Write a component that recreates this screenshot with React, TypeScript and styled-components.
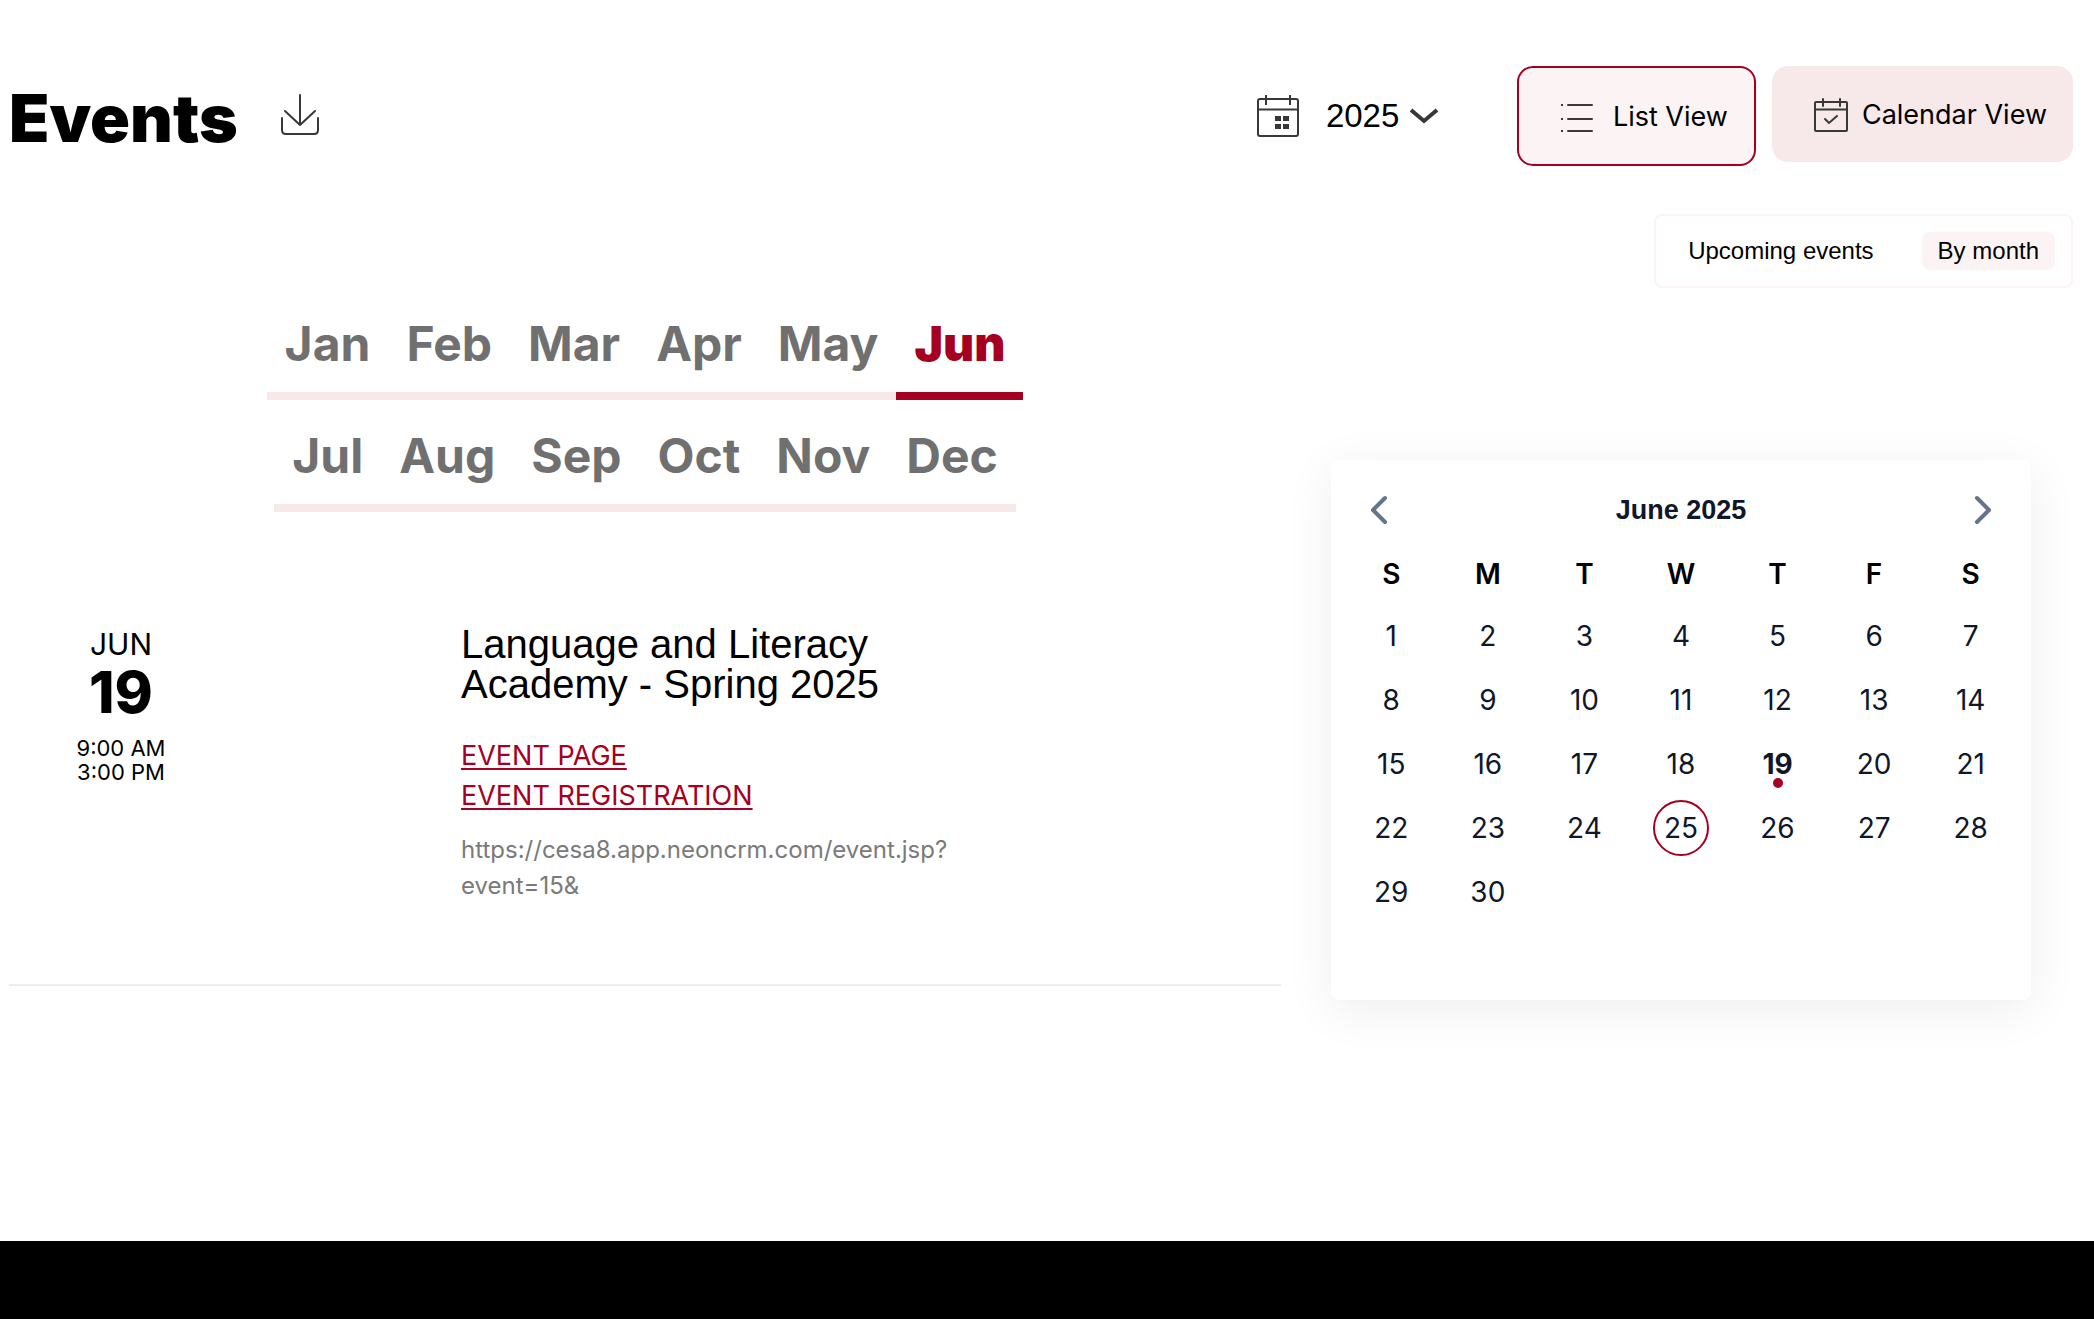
import React, { useState } from "react";
import styled, { createGlobalStyle } from "styled-components";

const color = {
  brand: "#a50021",
  tint: "#f7e8ea",
  tintLight: "#fcf3f5",
  muted: "#707070",
  icon: "#383838",
  navy: "#0f172a",
  slate: "#64748b",
  rule: "#e8eef4",
};

const body = `Inter, "Noto Sans", sans-serif`;
const plain = `"Liberation Sans", Arial, sans-serif`;

const GlobalStyle = createGlobalStyle`
  *, *::before, *::after { box-sizing: border-box; }
  body { margin: 0; background: #fff; color: #000; font-family: ${body}; }
  button, select { font: inherit; color: inherit; cursor: pointer; }
  h1, h2, p { margin: 0; }
`;

const Page = styled.div`
  min-height: 100vh;
  display: flex;
  flex-direction: column;
`;

const Content = styled.main`
  flex: 1;
  padding: 66px 21px 64px 9px;
`;

const Footer = styled.footer`
  height: 78px;
  background: #000;
`;

const Header = styled.header`
  display: flex;
  align-items: center;
  justify-content: space-between;
  min-height: 100px;
`;

const TitleGroup = styled.div`
  display: flex;
  align-items: center;
  gap: 42px;
`;

const Title = styled.h1`
  font-size: 66px;
  line-height: 72px;
  font-weight: 900;
  padding-top: 4px;
`;

const IconButton = styled.button`
  display: flex;
  padding: 0;
  border: 0;
  background: none;
`;

const Controls = styled.div`
  display: flex;
  align-items: center;
`;

const YearPicker = styled.label`
  display: flex;
  align-items: center;
  margin-right: 78px;
`;

const YearSelect = styled.select`
  appearance: none;
  border: 0;
  padding: 0;
  margin: 0 9px 0 27px;
  background: none;
  font-family: ${plain};
  font-size: 33px;
  line-height: 40px;
`;

const ViewSwitch = styled.div`
  display: flex;
  align-items: flex-start;
  gap: 16px;
`;

const ViewButton = styled.button<{ $active?: boolean }>`
  display: flex;
  align-items: center;
  gap: 14px;
  min-height: ${(p) => (p.$active ? 100 : 96)}px;
  padding: 2px 26px 0 42px;
  border: ${(p) => (p.$active ? `2px solid ${color.brand}` : "0")};
  border-radius: 16px;
  background: ${(p) => (p.$active ? color.tintLight : color.tint)};
  font-size: 27px;
  line-height: 32px;
`;

const FilterRow = styled.div`
  display: flex;
  justify-content: flex-end;
  margin-top: 48px;
`;

const FilterGroup = styled.div`
  display: flex;
  gap: 32px;
  padding: 16px;
  border: 2px solid ${color.tintLight};
  border-radius: 8px;
`;

const FilterButton = styled.button<{ $active?: boolean }>`
  padding: 0 16px;
  border: 0;
  border-radius: 8px;
  background: ${(p) => (p.$active ? color.tintLight : "transparent")};
  font-family: ${plain};
  font-size: 24px;
  line-height: 38px;
`;

const Columns = styled.div`
  display: grid;
  grid-template-columns: 53fr 33fr;
  align-items: start;
`;

const MonthTabs = styled.nav`
  display: flex;
  flex-direction: column;
  align-items: center;
`;

const MonthRow = styled.div`
  display: flex;
`;

const MonthTab = styled.button<{ $active?: boolean }>`
  padding: 24px 18px 16px;
  border: 0;
  border-bottom: 8px solid ${(p) => (p.$active ? color.brand : color.tint)};
  background: none;
  color: ${(p) => (p.$active ? color.brand : color.muted)};
  font-size: 48px;
  line-height: 64px;
  font-weight: ${(p) => (p.$active ? 900 : 700)};
`;

const EventItem = styled.article`
  display: grid;
  grid-template-columns: 224px minmax(0, 520px);
  column-gap: 228px;
  padding: 112px 0 80px;
  border-bottom: 2px solid ${color.rule};
`;

const EventDate = styled.div`
  display: flex;
  flex-direction: column;
  align-items: center;
  padding-top: 4px;
`;

const DateMonth = styled.span`
  font-size: 30px;
  line-height: 32px;
`;

const DateDay = styled.span`
  font-size: 58px;
  line-height: 64px;
  font-weight: 800;
  margin-bottom: 12px;
`;

const DateTime = styled.span`
  font-size: 22px;
  line-height: 24px;
`;

const EventTitle = styled.h2`
  font-family: ${plain};
  font-size: 40px;
  line-height: 40px;
  font-weight: 400;
  margin-bottom: 32px;
`;

const EventLinks = styled.div`
  display: flex;
  flex-direction: column;
  align-items: flex-start;
  margin-bottom: 16px;
`;

const EventLink = styled.a`
  color: ${color.brand};
  font-size: 27px;
  line-height: 40px;
  text-decoration-thickness: 2px;
  text-underline-offset: 3px;
`;

const EventUrl = styled.p`
  color: #7a7a7a;
  font-size: 24px;
  line-height: 36px;
`;

const Side = styled.aside`
  padding: 172px 42px 0 50px;
`;

const Card = styled.section`
  padding: 12px;
  border-radius: 8px;
  background: #fff;
  box-shadow: 0 10px 50px rgba(0, 0, 0, 0.07);
`;

const CardHeader = styled.div`
  display: flex;
  align-items: center;
  justify-content: space-between;
  height: 76px;
  padding: 0 26px;
`;

const CardTitle = styled.h2`
  color: ${color.navy};
  font-family: ${plain};
  font-size: 27px;
  line-height: 32px;
  font-weight: 700;
`;

const MonthGrid = styled.table`
  width: 100%;
  table-layout: fixed;
  border-collapse: collapse;
  font-size: 28px;
  line-height: 52px;
`;

const Weekday = styled.th`
  height: 56px;
  padding: 0 0 4px;
  font-weight: 600;
`;

const DayCell = styled.td`
  height: 64px;
  padding: 4px 0;
`;

const Day = styled.button<{ $today?: boolean; $event?: boolean }>`
  position: relative;
  display: block;
  width: 56px;
  height: 56px;
  margin: 0 auto;
  padding: 0;
  border: 2px solid ${(p) => (p.$today ? color.brand : "transparent")};
  border-radius: 50%;
  background: none;
  color: ${color.navy};
  font-weight: ${(p) => (p.$event ? 700 : 400)};
`;

const EventDot = styled.i`
  position: absolute;
  left: 21px;
  bottom: 2px;
  width: 10px;
  height: 10px;
  border-radius: 50%;
  background: ${color.brand};
`;

const DownloadIcon = () => (
  <svg width="40" height="44" viewBox="0 1 40 44" fill="none" stroke={color.icon} strokeWidth="2" strokeLinecap="round" strokeLinejoin="round">
    <path d="M20 2v30M5 18l15 14 15-14" />
    <path d="M2 25v12q0 4 4 4h28q4 0 4-4V25" />
  </svg>
);

const YearIcon = () => (
  <svg width="42" height="42" viewBox="0 0 42 42" fill="none" stroke={color.icon} strokeWidth="2">
    <rect x="1" y="4" width="40" height="37" rx="2" />
    <path d="M1 14.500h40M9 0v10M33 0v10" />
    <path d="M18 21h6v5h-6zM26 21h6v5h-6zM18 29h6v5h-6zM26 29h6v5h-6z" fill={color.icon} stroke="none" />
  </svg>
);

const ChevronDown = () => (
  <svg width="30" height="18" viewBox="0 0 30 18" fill="none" stroke={color.icon} strokeWidth="4">
    <path d="M2 3l13 11L28 3" />
  </svg>
);

const ListIcon = () => (
  <svg width="38" height="34" viewBox="0 0 38 34" fill="none" stroke={color.icon} strokeWidth="2">
    <path d="M0 5h2M0 19h2M0 31h2" />
    <path d="M7 5h24M7 19h24M7 31h24" strokeLinecap="round" />
  </svg>
);

const CalendarIcon = () => (
  <svg width="34" height="36" viewBox="0 0 34 36" fill="none" stroke={color.icon} strokeWidth="2" strokeLinecap="round">
    <rect x="1" y="5" width="32" height="29" rx="1" />
    <path d="M1 12.500h32M9 2v7M26 2v7M11 22l4 4 8-7" />
  </svg>
);

const ArrowIcon = ({ next }: { next?: boolean }) => (
  <svg width="20" height="30" viewBox="0 0 20 30" fill="none" stroke={color.slate} strokeWidth="4" strokeLinecap="round" strokeLinejoin="round">
    <path d={next ? "M4 3l12 12L4 27" : "M16 3L4 15l12 12"} />
  </svg>
);

const MONTHS = [
  ["Jan", "Feb", "Mar", "Apr", "May", "Jun"],
  ["Jul", "Aug", "Sep", "Oct", "Nov", "Dec"],
];
const WEEKDAYS = ["S", "M", "T", "W", "T", "F", "S"];
const WEEKS = Array.from({ length: 6 }, (_, week) =>
  Array.from({ length: 7 }, (_, day) => {
    const date = week * 7 + day + 1;
    return date <= 30 ? date : null;
  })
);
const TODAY = 25;
const EVENT_DAYS = [19];

export default function App() {
  const [year, setYear] = useState("2025");
  const [month, setMonth] = useState("Jun");

  return (
    <Page>
      <GlobalStyle />
      <Content>
        <Header>
          <TitleGroup>
            <Title>Events</Title>
            <IconButton aria-label="Download events">
              <DownloadIcon />
            </IconButton>
          </TitleGroup>
          <Controls>
            <YearPicker>
              <YearIcon />
              <YearSelect aria-label="Year" value={year} onChange={(e) => setYear(e.target.value)}>
                <option>2024</option>
                <option>2025</option>
                <option>2026</option>
              </YearSelect>
              <ChevronDown />
            </YearPicker>
            <ViewSwitch>
              <ViewButton $active aria-pressed="true">
                <ListIcon />
                List View
              </ViewButton>
              <ViewButton aria-pressed="false">
                <CalendarIcon />
                Calendar View
              </ViewButton>
            </ViewSwitch>
          </Controls>
        </Header>

        <FilterRow>
          <FilterGroup>
            <FilterButton>Upcoming events</FilterButton>
            <FilterButton $active>By month</FilterButton>
          </FilterGroup>
        </FilterRow>

        <Columns>
          <div>
            <MonthTabs aria-label="Months">
              {MONTHS.map((row) => (
                <MonthRow key={row[0]}>
                  {row.map((name) => (
                    <MonthTab key={name} $active={name === month} onClick={() => setMonth(name)}>
                      {name}
                    </MonthTab>
                  ))}
                </MonthRow>
              ))}
            </MonthTabs>
            <EventItem>
              <EventDate>
                <DateMonth>JUN</DateMonth>
                <DateDay>19</DateDay>
                <DateTime>9:00 AM</DateTime>
                <DateTime>3:00 PM</DateTime>
              </EventDate>
              <div>
                <EventTitle>Language and Literacy Academy - Spring 2025</EventTitle>
                <EventLinks>
                  <EventLink href="#event">EVENT PAGE</EventLink>
                  <EventLink href="#registration">EVENT REGISTRATION</EventLink>
                </EventLinks>
                <EventUrl>https://cesa8.app.neoncrm.com/event.jsp?event=15&amp;</EventUrl>
              </div>
            </EventItem>
          </div>

          <Side>
            <Card>
              <CardHeader>
                <IconButton aria-label="Previous month">
                  <ArrowIcon />
                </IconButton>
                <CardTitle>June 2025</CardTitle>
                <IconButton aria-label="Next month">
                  <ArrowIcon next />
                </IconButton>
              </CardHeader>
              <MonthGrid>
                <thead>
                  <tr>
                    {WEEKDAYS.map((name, i) => (
                      <Weekday key={i} scope="col">
                        {name}
                      </Weekday>
                    ))}
                  </tr>
                </thead>
                <tbody>
                  {WEEKS.map((week, w) => (
                    <tr key={w}>
                      {week.map((date, d) => (
                        <DayCell key={d}>
                          {date && (
                            <Day $today={date === TODAY} $event={EVENT_DAYS.includes(date)}>
                              {date}
                              {EVENT_DAYS.includes(date) && <EventDot />}
                            </Day>
                          )}
                        </DayCell>
                      ))}
                    </tr>
                  ))}
                </tbody>
              </MonthGrid>
            </Card>
          </Side>
        </Columns>
      </Content>
      <Footer />
    </Page>
  );
}
